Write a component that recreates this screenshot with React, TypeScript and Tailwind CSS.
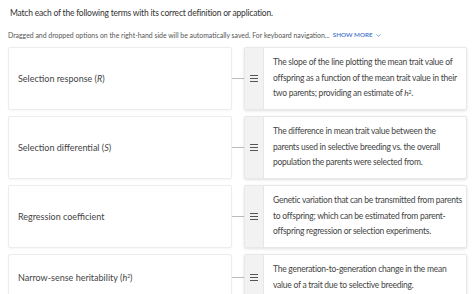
import { ChevronDown } from 'lucide-react'
import type { ReactNode } from 'react'

interface Pair {
  term: ReactNode
  lines: ReactNode[]
}

const sq = <sup className="text-[5px] leading-none">2</sup>

const pairs: Pair[] = [
  {
    term: <>Selection response (<i>R</i>)</>,
    lines: [
      'The slope of the line plotting the mean trait value of',
      'offspring as a function of the mean trait value in their',
      <>two parents; providing an estimate of <i>h</i>{sq}.</>,
    ],
  },
  {
    term: <>Selection differential (<i>S</i>)</>,
    lines: [
      'The difference in mean trait value between the',
      'parents used in selective breeding vs. the overall',
      'population the parents were selected from.',
    ],
  },
  {
    term: 'Regression coefficient',
    lines: [
      'Genetic variation that can be transmitted from parents',
      'to offspring; which can be estimated from parent-',
      'offspring regression or selection experiments.',
    ],
  },
  {
    term: <>Narrow-sense heritability (<i>h</i>{sq})</>,
    lines: [
      'The generation-to-generation change in the mean',
      'value of a trait due to selective breeding.',
    ],
  },
]

function Handle() {
  return (
    <svg width="8" height="7" viewBox="0 0 8 7" className="text-[#555]">
      <path d="M0 0.5H8M0 3.5H8M0 6.5H8" stroke="currentColor" strokeWidth="1" />
    </svg>
  )
}

export default function App() {
  return (
    <div className="w-[474px] h-[294px] overflow-hidden bg-white font-['Lato',sans-serif] text-[#333]">
      <h1 className="pl-[10px] pt-[6px] text-[8.5px] tracking-[-0.2px] leading-[14px]">
        Match each of the following terms with its correct definition or application.
      </h1>
      <p className="mt-[10px] pl-[8px] text-[6.9px] leading-[10px] text-[#555] flex items-center">
        Dragged and dropped options on the right-hand side will be automatically saved. For keyboard
        navigation...
        <span className="ml-[3px] text-[6.3px] text-[#2f64c8] font-medium">SHOW MORE</span>
        <ChevronDown className="ml-[2px] w-[7px] h-[7px] text-[#2f64c8]" strokeWidth={2} />
      </p>

      <div className="mt-[7px] flex flex-col gap-[6.5px] pl-[8px] pr-[7px]">
        {pairs.map((p, i) => (
          <div key={i} className="flex items-stretch">
            <div className="w-[224px] flex items-center bg-white border border-[#ececec] rounded-[2px] pl-[9px] text-[9px] text-[#444] shadow-[0_1px_2px_rgba(0,0,0,0.04)]">
              <span>{p.term}</span>
            </div>
            <div className="w-[12px] flex items-center">
              <div className="h-px w-full bg-[#bbb]" />
            </div>
            <div className="flex-1 flex bg-white rounded-[2px] border border-[#e8e8e8] shadow-[0_1px_3px_rgba(0,0,0,0.12)] overflow-hidden">
              <div className="w-[19px] shrink-0 bg-[#f2f2f2] border-r border-[#e6e6e6] flex items-center justify-center">
                <Handle />
              </div>
              <div className="flex-1 pl-[9px] py-[7px] text-[8.5px] leading-[15.5px] tracking-[-0.25px] text-[#444]">
                {p.lines.map((l, j) => (
                  <div key={j} className="whitespace-nowrap">{l}</div>
                ))}
              </div>
            </div>
          </div>
        ))}
      </div>
    </div>
  )
}
